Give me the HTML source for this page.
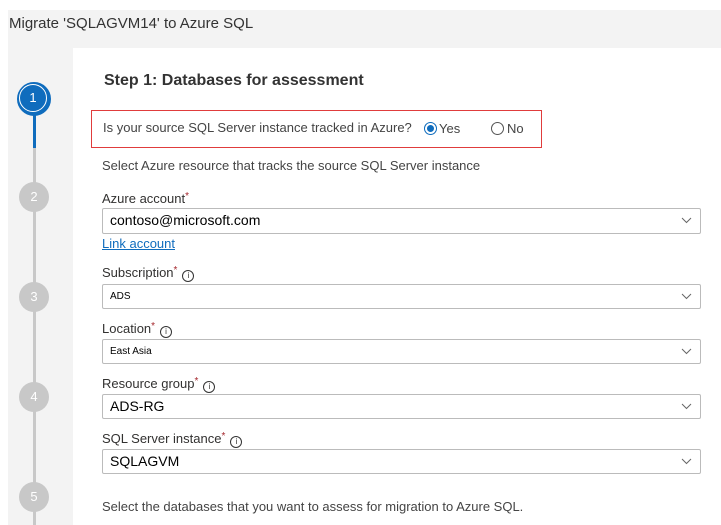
<!DOCTYPE html><html><head><style>
body{margin:0;width:721px;height:525px;background:#fff;font-family:"Liberation Sans",sans-serif;position:relative;overflow:hidden;color:#323130}
.a{position:absolute}
.title{left:8px;top:10px;width:713px;height:38px;background:#f3f3f3;font-size:15px;line-height:28px;padding-left:1px;color:#333}
.side{left:8px;top:48px;width:65px;height:477px;background:#f3f3f3}
.line{left:33px;width:3px;background:#c8c8c8}
.c{width:30px;height:30px;border-radius:50%;background:#c8c8c8;color:#fff;font-size:13px;text-align:center;line-height:30px;left:19px}
.lbl{left:102px;font-size:13px;color:#323130}
.lbl b{color:#a4262c;font-weight:normal;font-size:10px;vertical-align:top}
.info{display:inline-block;width:10px;height:10px;border:1px solid #333;border-radius:50%;font-size:8px;line-height:10px;text-align:center;margin-left:5px;vertical-align:-1px}
.dd{left:102px;width:590px;height:23px;border:1px solid #bbb;border-radius:2px;font-size:14px;line-height:23px;padding-left:7px;box-sizing:content-box;color:#000}
.dd.s{font-size:10px}
.dd svg{position:absolute;right:8px;top:8px}
</style></head><body>
<div class="a title">Migrate 'SQLAGVM14' to Azure SQL</div>
<div class="a side"></div>
<div class="a line" style="top:110px;height:415px"></div>
<div class="a" style="left:33px;top:110px;width:3px;height:38px;background:#0f6cbd"></div>
<div class="a" style="left:17px;top:82px;width:30px;height:30px;border-radius:50%;background:#0f6cbd;border:2px solid #0f6cbd"></div>
<div class="a" style="left:19px;top:84px;width:26px;height:26px;border-radius:50%;border:1px solid #fff;background:#0f6cbd;color:#fff;font-size:13px;text-align:center;line-height:26px">1</div>
<div class="a c" style="top:182px">2</div>
<div class="a c" style="top:282px">3</div>
<div class="a c" style="top:382px">4</div>
<div class="a c" style="top:482px">5</div>
<div class="a" style="left:104px;top:72px;font-size:16px;font-weight:bold;color:#333">Step 1: Databases for assessment</div>
<div class="a" style="left:91px;top:110px;width:449px;height:36px;border:1px solid #e03c3c"></div>
<div class="a" style="left:103px;top:120px;font-size:13px;color:#444">Is your source SQL Server instance tracked in Azure?</div>
<div class="a" style="left:424px;top:122px;width:11px;height:11px;border:1px solid #0f6cbd;border-radius:50%"></div>
<div class="a" style="left:427px;top:125px;width:7px;height:7px;background:#0f6cbd;border-radius:50%"></div>
<div class="a" style="left:439px;top:121px;font-size:13px;color:#444">Yes</div>
<div class="a" style="left:491px;top:122px;width:11px;height:11px;border:1px solid #555;border-radius:50%"></div>
<div class="a" style="left:507px;top:121px;font-size:13px;color:#444">No</div>
<div class="a" style="left:102px;top:158px;font-size:13px;color:#444">Select Azure resource that tracks the source SQL Server instance</div>
<div class="a lbl" style="top:191px">Azure account<b>*</b></div>
<div class="a dd" style="top:208px;height:24px">contoso@microsoft.com<svg width="11" height="7"><path d="M1 1l4.5 4.5L10 1" fill="none" stroke="#666"/></svg></div>
<div class="a" style="left:102px;top:236px;font-size:13px;color:#0f6cbd;text-decoration:underline">Link account</div>
<div class="a lbl" style="top:265px">Subscription<b>*</b><span class="info">i</span></div>
<div class="a dd s" style="top:284px">ADS<svg width="11" height="7"><path d="M1 1l4.5 4.5L10 1" fill="none" stroke="#666"/></svg></div>
<div class="a lbl" style="top:321px">Location<b>*</b><span class="info">i</span></div>
<div class="a dd s" style="top:339px">East Asia<svg width="11" height="7"><path d="M1 1l4.5 4.5L10 1" fill="none" stroke="#666"/></svg></div>
<div class="a lbl" style="top:376px">Resource group<b>*</b><span class="info">i</span></div>
<div class="a dd" style="top:394px">ADS-RG<svg width="11" height="7"><path d="M1 1l4.5 4.5L10 1" fill="none" stroke="#666"/></svg></div>
<div class="a lbl" style="top:431px">SQL Server instance<b>*</b><span class="info">i</span></div>
<div class="a dd" style="top:449px">SQLAGVM<svg width="11" height="7"><path d="M1 1l4.5 4.5L10 1" fill="none" stroke="#666"/></svg></div>
<div class="a" style="left:102px;top:499px;font-size:13px;color:#444">Select the databases that you want to assess for migration to Azure SQL.</div>
</body></html>
